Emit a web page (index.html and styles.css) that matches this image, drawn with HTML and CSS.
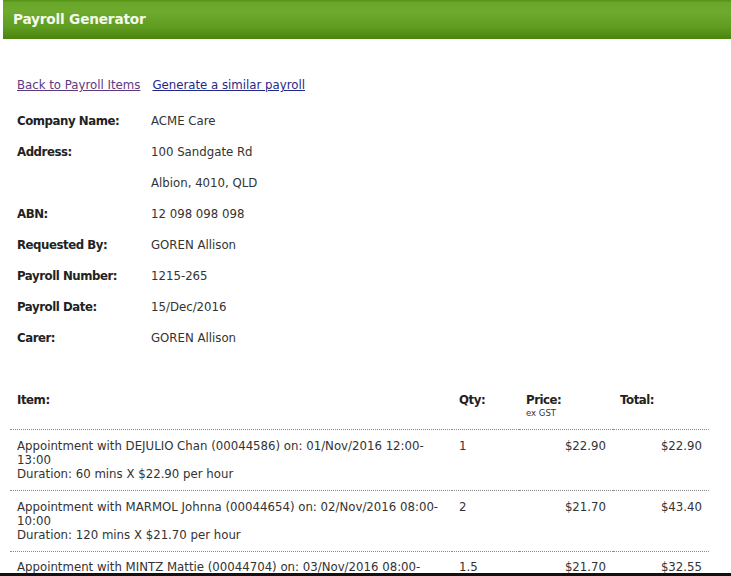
FILE: index.html
```html
<!DOCTYPE html>
<html>
<head>
<meta charset="utf-8">
<title>Payroll Generator</title>
<link rel="stylesheet" href="styles.css">
</head>
<body>
<header class="topbar"><h1 class="title">Payroll Generator</h1></header>
<main class="content">
  <nav class="links">
    <a class="link visited" href="#">Back to Payroll Items</a>
    <a class="link" href="#">Generate a similar payroll</a>
  </nav>
  <dl class="info">
    <dt>Company Name:</dt><dd>ACME Care</dd>
    <dt>Address:</dt><dd>100 Sandgate Rd</dd>
    <dt></dt><dd>Albion, 4010, QLD</dd>
    <dt>ABN:</dt><dd>12 098 098 098</dd>
    <dt>Requested By:</dt><dd>GOREN Allison</dd>
    <dt>Payroll Number:</dt><dd>1215-265</dd>
    <dt>Payroll Date:</dt><dd>15/Dec/2016</dd>
    <dt>Carer:</dt><dd>GOREN Allison</dd>
  </dl>
  <table class="items">
    <colgroup><col class="c-item"><col class="c-qty"><col class="c-price"><col class="c-total"></colgroup>
    <thead>
      <tr><th>Item:</th><th>Qty:</th><th>Price:<span class="sub">ex GST</span></th><th>Total:</th></tr>
    </thead>
    <tbody>
      <tr><td>Appointment with DEJULIO Chan (00044586) on: 01/Nov/2016 12:00-13:00<br>Duration: 60 mins X $22.90 per hour</td><td>1</td><td class="num">$22.90</td><td class="num">$22.90</td></tr>
      <tr><td>Appointment with MARMOL Johnna (00044654) on: 02/Nov/2016 08:00-10:00<br>Duration: 120 mins X $21.70 per hour</td><td>2</td><td class="num">$21.70</td><td class="num">$43.40</td></tr>
      <tr class="last"><td>Appointment with MINTZ Mattie (00044704) on: 03/Nov/2016 08:00-09:30<br>Duration: 90 mins X $21.70 per hour</td><td>1.5</td><td class="num">$21.70</td><td class="num">$32.55</td></tr>
    </tbody>
  </table>
</main>
<div class="edge"></div>
</body>
</html>
```
FILE: styles.css
```css
html, body { margin: 0; padding: 0; background: #fff; }
body {
  font-family: "DejaVu Sans", Verdana, sans-serif;
  font-size: 11.75px;
  color: #2a2a2a;
  overflow: hidden;
  height: 576px;
}
.topbar {
  margin-left: 3px;
  height: 39px;
  display: flex;
  align-items: center;
  background: linear-gradient(#528f14 0, #68a628 6%, #6eaa2e 30%, #5f9c20 70%, #4e8812 95%, #4a8210 100%);
}
.title {
  margin: 0 0 0 10px;
  font-size: 13.7px;
  letter-spacing: -0.2px;
  font-weight: bold;
  color: #f4f9ec;
  line-height: 1;
  padding-top: 1px;
}
.content { padding: 39px 0 0 17px; }
.links { display: flex; gap: 12px; line-height: 14px; }
.link { color: #1f2a8a; text-decoration: underline; }
.link.visited { color: #5b3a82; }
.info {
  margin: 13px 0 0 0;
  display: grid;
  grid-template-columns: 134px 1fr;
  grid-auto-rows: 31px;
  align-items: center;
}
.info dt { font-weight: bold; color: #222; letter-spacing: -0.45px; }
.info dd { margin: 0; color: #333; }
.items {
  margin: 33px 0 0 -7px;
  width: 699px;
  border-collapse: collapse;
  table-layout: fixed;
  line-height: 14px;
}
.c-item { width: 442px; }
.c-qty { width: 67px; }
.c-price { width: 94px; }
.c-total { width: 96px; }
.items th {
  text-align: left;
  font-weight: bold;
  letter-spacing: -0.45px;
  vertical-align: top;
  padding: 7px 7px 10px;
  height: 22px;
  border-bottom: 1px dotted #8a8a8a;
  color: #222;
}
.sub { display: block; font-weight: normal; letter-spacing: 0; font-size: 8.5px; line-height: 12px; color: #333; }
.items td {
  vertical-align: top;
  padding: 9px 7px 9px;
  border-bottom: 1px dotted #8a8a8a;
  color: #333;
}
.items tr.last td { padding-top: 8px; }
.items td.num { text-align: right; }
.edge {
  position: fixed;
  left: 0; right: 0; bottom: 0;
  height: 3px;
  background: #111;
}
```
